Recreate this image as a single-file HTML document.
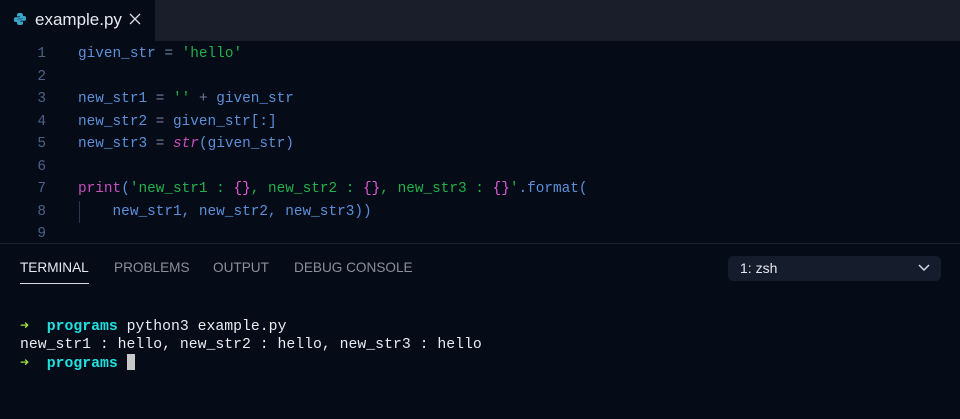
<!DOCTYPE html>
<html><head><style>
*{margin:0;padding:0;box-sizing:border-box}
body{width:960px;height:419px;background:#050b17;overflow:hidden;position:relative;font-family:"Liberation Sans",sans-serif}
.tabbar{position:absolute;left:0;top:0;width:960px;height:41px;background:#1a1e2a}
.tab{position:absolute;left:0;top:0;width:155px;height:41px;background:#050b17;color:#e6e9ef;font-size:17px}
.tab .t{position:absolute;left:35px;top:10px}
.code{position:absolute;top:43px;left:0;font-family:"Liberation Mono",monospace;font-size:14.4px;line-height:22.5px;white-space:pre;color:#5d8fd8}
.ln{position:absolute;top:0;left:0;width:46px;text-align:right;color:#4c6287}
.cl{position:absolute;top:0;left:78px}
.s{color:#22b04b}.p{color:#c54fbc}.o{color:#6f7f9e}.b{color:#e05ad8}
.sep{position:absolute;left:0;top:243px;width:960px;height:1px;background:#1c2233}
.guide{position:absolute;left:79px;top:201px;width:1px;height:22px;background:#2a3550}
.ptabs{position:absolute;top:260px;font-size:13.6px;color:#8a8f99}
.ptabs span{position:absolute;white-space:nowrap}
.ul{position:absolute;left:20px;top:283px;width:69px;height:1px;background:#d8dbe2}
.sel{position:absolute;left:728px;top:256px;width:213px;height:25px;background:#151c2b;border-radius:5px;color:#e6e9ef;font-size:14px}
.term{position:absolute;left:20px;top:318px;font-family:"Liberation Mono",monospace;font-size:14.8px;line-height:18px;white-space:pre;color:#e8eaef}
.g{color:#9ae23a}.c{color:#20e0e0;font-weight:bold}
.cur{display:inline-block;width:8px;height:16px;background:#c8c8c8;vertical-align:-3px}
</style></head><body>
<div class="tabbar"></div>
<div class="tab">
<svg style="position:absolute;left:13px;top:12px" width="14" height="14" viewBox="0 0 14 14"><path d="M7 1C4 1 4 2 4 3v1.5h3v.7H2.5C1 5.2 1 6.5 1 7.5s0 2.5 1.5 2.5H4V8.5c0-1 .8-1.8 1.8-1.8h3C9.6 6.7 10 6 10 5.3V3C10 2 9.5 1 7 1z" fill="#3aa6c8"/><path d="M7 13c3 0 3-1 3-2V9.5H7v-.7h4.5C13 8.8 13 7.5 13 6.5s0-2.5-1.5-2.5H10v1.5c0 1-.8 1.8-1.8 1.8h-3C4.4 7.3 4 8 4 8.7V11c0 1 .5 2 3 2z" fill="#3aa6c8"/></svg>
<span class="t">example.py</span>
<svg style="position:absolute;left:129px;top:13px" width="12" height="12" viewBox="0 0 12 12"><path d="M1 1l10 10M11 1L1 11" stroke="#d8dbe2" stroke-width="1.3"/></svg></div>
<div class="code"><div class="ln">1
2
3
4
5
6
7
8
9</div><div class="cl">given_str <span class="o">=</span> <span class="s">'hello'</span>

new_str1 <span class="o">=</span> <span class="s">''</span> <span class="o">+</span> given_str
new_str2 <span class="o">=</span> given_str[:]
new_str3 <span class="o">=</span> <i class="p">str</i>(given_str)

<span class="p">print</span>(<span class="s">'new_str1 : <span class="b">{}</span>, new_str2 : <span class="b">{}</span>, new_str3 : <span class="b">{}</span>'</span>.format(
    new_str1, new_str2, new_str3))</div></div>
<div class="guide"></div>
<div class="sep"></div>
<div class="ptabs"><span style="left:20px;color:#e6e9ef">TERMINAL</span><span style="left:114px">PROBLEMS</span><span style="left:213px">OUTPUT</span><span style="left:294px">DEBUG CONSOLE</span></div>
<div class="ul"></div>
<div class="sel"><span style="position:absolute;left:12px;top:4px">1: zsh</span>
<svg style="position:absolute;left:190px;top:8px" width="12" height="8" viewBox="0 0 12 8"><path d="M1 1l5 5 5-5" stroke="#d8dbe2" stroke-width="1.5" fill="none"/></svg></div>
<div class="term"><span class="g">➜</span>  <span class="c">programs</span> python3 example.py
new_str1 : hello, new_str2 : hello, new_str3 : hello
<span class="g">➜</span>  <span class="c">programs</span> <span class="cur"></span></div>
</body></html>
